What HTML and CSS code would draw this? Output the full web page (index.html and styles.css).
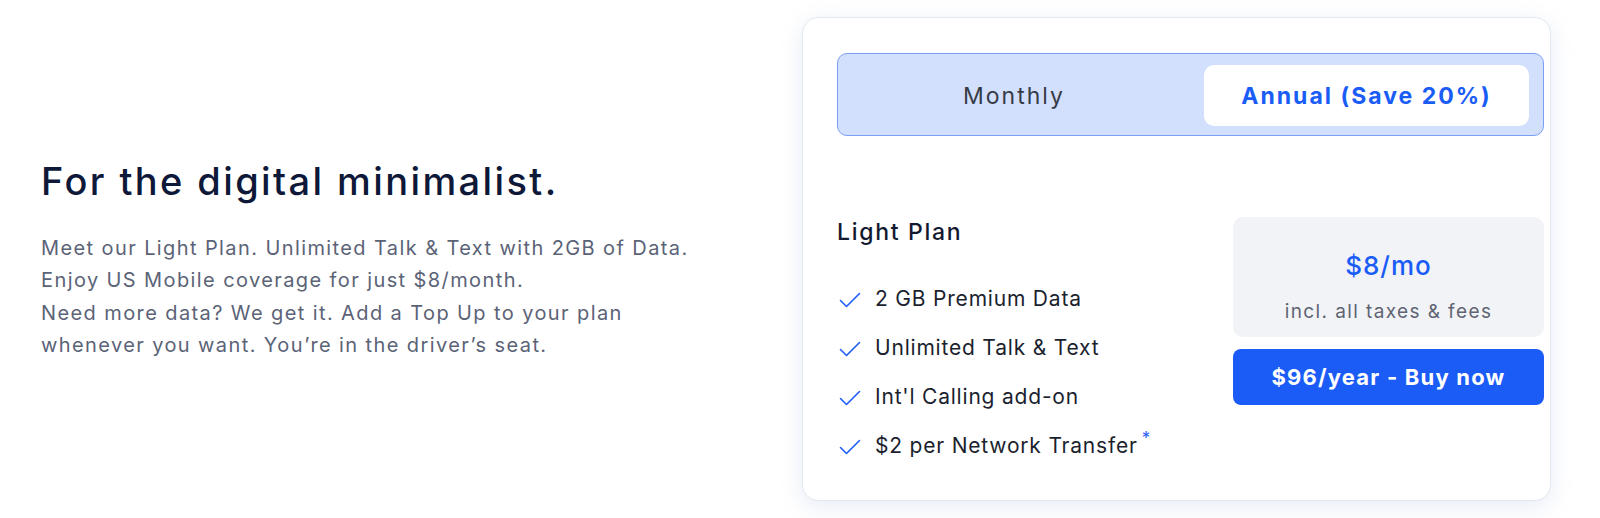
FILE: index.html
```html
<!DOCTYPE html>
<html lang="en">
<head>
<meta charset="utf-8">
<title>Light Plan</title>
<link rel="stylesheet" href="styles.css">
</head>
<body>
<main class="page">
  <section class="intro">
    <h1 class="intro-title">For the digital minimalist.</h1>
    <p class="intro-text">Meet our Light Plan. Unlimited Talk &amp; Text with 2GB of Data.<br>Enjoy US Mobile coverage for just $8/month.<br>Need more data? We get it. Add a Top Up to your plan<br>whenever you want. You’re in the driver’s seat.</p>
  </section>
  <section class="card">
    <div class="toggle">
      <div class="toggle-opt">Monthly</div>
      <div class="toggle-opt active">Annual (Save 20%)</div>
    </div>
    <div class="plan">
      <div class="plan-info">
        <h2 class="plan-name">Light Plan</h2>
        <ul class="features">
          <li class="feature"><svg class="check" viewBox="0 0 22 16" width="22" height="16"><path d="M1.5 8.5 L7.5 14.5 L20.5 1.5" fill="none" stroke="#1f5ef7" stroke-width="1.6" stroke-linecap="round" stroke-linejoin="round"/></svg><span>2 GB Premium Data</span></li>
          <li class="feature"><svg class="check" viewBox="0 0 22 16" width="22" height="16"><path d="M1.5 8.5 L7.5 14.5 L20.5 1.5" fill="none" stroke="#1f5ef7" stroke-width="1.6" stroke-linecap="round" stroke-linejoin="round"/></svg><span>Unlimited Talk &amp; Text</span></li>
          <li class="feature"><svg class="check" viewBox="0 0 22 16" width="22" height="16"><path d="M1.5 8.5 L7.5 14.5 L20.5 1.5" fill="none" stroke="#1f5ef7" stroke-width="1.6" stroke-linecap="round" stroke-linejoin="round"/></svg><span>Int'l Calling add-on</span></li>
          <li class="feature"><svg class="check" viewBox="0 0 22 16" width="22" height="16"><path d="M1.5 8.5 L7.5 14.5 L20.5 1.5" fill="none" stroke="#1f5ef7" stroke-width="1.6" stroke-linecap="round" stroke-linejoin="round"/></svg><span>$2 per Network Transfer<sup class="star">*</sup></span></li>
        </ul>
      </div>
      <div class="pricing">
        <div class="price-box">
          <div class="price">$8/mo</div>
          <div class="price-note">incl. all taxes &amp; fees</div>
        </div>
        <button class="buy">$96/year - Buy now</button>
      </div>
    </div>
  </section>
</main>
</body>
</html>
```
FILE: styles.css
```css
* { box-sizing: border-box; }
html, body { margin: 0; padding: 0; background: #ffffff; }
body {
  font-family: Inter, "Noto Sans", sans-serif;
  width: 1600px;
  height: 518px;
  overflow: hidden;
}
.page {
  display: flex;
  justify-content: space-between;
  align-items: flex-start;
  padding: 17px 49px 0 41px;
}
.intro {
  padding-top: 142px;
}
.intro-title {
  margin: 0;
  font-size: 38px;
  font-weight: 500;
  color: #0e1838;
  letter-spacing: 2.4px;
  line-height: 44px;
}
.intro-text {
  margin: 29px 0 0;
  font-size: 20px;
  line-height: 32.3px;
  color: #5b6377;
  font-weight: 400;
  letter-spacing: 1.4px;
}
.card {
  width: 749px;
  height: 484px;
  background: #ffffff;
  border: 1px solid #e2e7f1;
  border-radius: 16px;
  box-shadow: 0 6px 22px rgba(120, 140, 200, 0.17);
  padding: 35px 6px 0 34px;
}
.toggle {
  display: flex;
  align-items: center;
  height: 83px;
  background: #d2e0fd;
  border: 1px solid #7c9ff3;
  border-radius: 10px;
  padding: 11px 14px 9px 0;
}
.toggle-opt {
  flex: 1;
  text-align: center;
  font-size: 23px;
  letter-spacing: 2px;
  color: #363b47;
  padding-right: 14px;
}
.toggle-opt.active {
  flex: 0 0 325px;
  height: 61px;
  display: flex;
  align-items: center;
  justify-content: center;
  background: #ffffff;
  border-radius: 10px;
  color: #1a5cf6;
  font-weight: 700;
  padding-right: 0;
}
.plan {
  display: flex;
  justify-content: space-between;
  margin-top: 81px;
}
.plan-name {
  margin: 0;
  font-size: 23px;
  font-weight: 500;
  color: #131a30;
  line-height: 30px;
  letter-spacing: 1.7px;
}
.features {
  list-style: none;
  margin: 37px 0 0;
  padding: 0 0 0 2px;
  display: flex;
  flex-direction: column;
  gap: 20px;
}
.feature {
  display: flex;
  align-items: center;
  gap: 14px;
  font-size: 21px;
  line-height: 29px;
  letter-spacing: 0.8px;
  color: #1b1f2e;
}
.check { flex: none; margin-top: 3px; }
.star {
  color: #1f5ef7;
  font-size: 17px;
  margin-left: 4px;
  vertical-align: 9px;
  line-height: 0;
}
.pricing {
  width: 311px;
  display: flex;
  flex-direction: column;
  gap: 12px;
}
.price-box {
  height: 120px;
  background: #f2f3f6;
  border-radius: 10px;
  display: flex;
  flex-direction: column;
  align-items: center;
  padding-top: 33px;
}
.price {
  font-size: 26px;
  font-weight: 500;
  color: #1a5cf6;
  line-height: 32px;
  letter-spacing: 1px;
}
.price-note {
  margin-top: 19px;
  font-size: 19px;
  color: #5f6473;
  line-height: 22px;
  letter-spacing: 1.4px;
}
.buy {
  height: 56px;
  border: none;
  border-radius: 8px;
  background: #1b5cf6;
  color: #ffffff;
  font-family: inherit;
  font-size: 22px;
  font-weight: 700;
  letter-spacing: 1.2px;
  cursor: pointer;
}
```
